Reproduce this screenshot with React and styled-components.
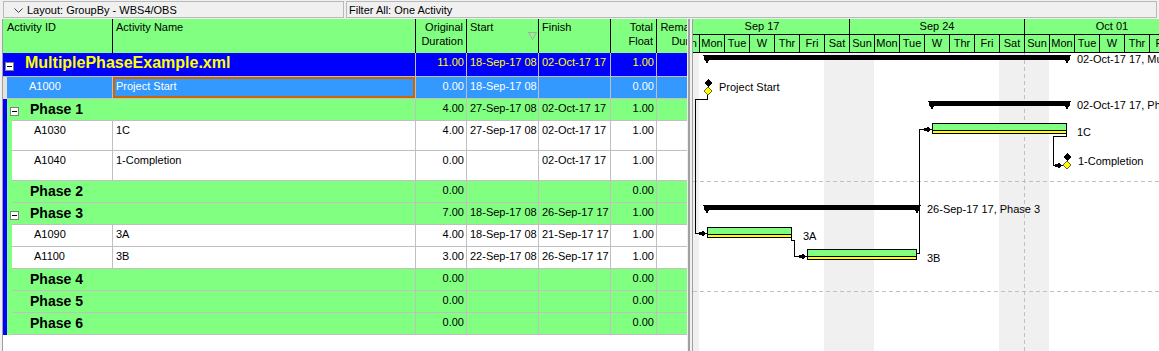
import React from 'react';
import styled, { createGlobalStyle } from 'styled-components';

const GREEN = '#80ff80';
const BLUE = '#0000ff';
const SELECT = '#3399ff';
const YELLOW = '#ffff00';
const GRID = '#c0c0c0';
const SHADE = '#f0f0f0';

// column widths of the activity table, the first one shrinks with the row's indent
const COLS = [110, 303, 51, 72, 72, 46, 60];
const cols = (indent = 0) =>
  COLS.map((w, i) => `${i === 0 ? w - indent : w}px`).join(' ');

// gantt scale: 25px a day, Sun 17-Sep starts 19px left of the visible area
const dayX = (d, h = 0) => Math.round(-19 + 25 * d + (25 * h) / 24);

const GlobalStyle = createGlobalStyle`
  html, body {
    margin: 0;
    padding: 0;
    background: #fff;
  }
  body {
    font-family: "Liberation Sans", Arial, sans-serif;
    font-size: 11px;
    color: #000;
  }
`;

const Page = styled.div`
  width: 1159px;
  height: 351px;
  overflow: hidden;
  display: flex;
  flex-direction: column;
  background: #fff;
`;

const TopBar = styled.div`
  flex: none;
  height: 19px;
  box-sizing: border-box;
  background: ${SHADE};
  display: flex;
  align-items: flex-start;
  gap: 2px;
  padding: 1px 0 0 3px;
`;

const BarBox = styled.div`
  flex: none;
  width: ${p => p.$w}px;
  height: 17px;
  box-sizing: border-box;
  border: 1px solid #b9b9b9;
  display: flex;
  align-items: center;
  gap: 4px;
  padding: 2px 0 0 ${p => p.$pl}px;
  line-height: 13px;
  white-space: nowrap;
`;

const Main = styled.div`
  flex: 1;
  display: flex;
  min-height: 0;
`;

const TablePane = styled.div`
  flex: none;
  width: 687px;
  box-sizing: border-box;
  border-left: 2px solid ${SHADE};
  padding-left: 1px;
  box-shadow: inset 1px 0 0 #a0a0a0;
  overflow: hidden;
`;

const Splitter = styled.div`
  flex: none;
  width: 5px;
  background: linear-gradient(
    to right,
    ${SHADE} 0 1px,
    #a0a0a0 1px 3px,
    ${SHADE} 3px 5px
  );
`;

const GanttPane = styled.div`
  flex: none;
  width: 467px;
  box-sizing: border-box;
  border-left: 1px solid #a0a0a0;
  overflow: hidden;
`;

const TableHeader = styled.div`
  display: grid;
  grid-template-columns: ${cols(0)};
  height: 34px;
  background: ${GREEN};
`;

const HeadCell = styled.div`
  border-right: 1px solid #000;
  padding: 1px 3px 0 ${p => p.$pl ?? 3}px;
  line-height: 14px;
  text-align: ${p => p.$align || 'left'};
  white-space: nowrap;
  overflow: hidden;
`;

const SortMark = styled.div`
  display: flex;
  justify-content: flex-end;
  margin: -2px -2px 0 0;
`;

const Row = styled.div`
  display: grid;
  grid-template-columns: ${p => cols(p.$indent)};
  height: ${p => p.$h}px;
  box-sizing: border-box;
  border-bottom: 1px solid ${GRID};
  background: ${p => p.$bg || 'transparent'};
  color: ${p => p.$fg || '#000'};
  box-shadow: ${p => (p.$band ? `-4px 0 0 #e2e2e2` : 'none')};
`;

const Cell = styled.div`
  border-right: 1px solid ${GRID};
  padding: 3px ${p => p.$pr ?? 3}px 0 ${p => p.$pl ?? 3}px;
  line-height: 13px;
  text-align: ${p => p.$align || 'left'};
  white-space: nowrap;
  overflow: hidden;
  box-shadow: ${p => (p.$selected ? 'inset 0 0 0 2px #cc6600' : 'none')};
`;

const TitleCell = styled.div`
  grid-column: span 2;
  border-right: 1px solid ${GRID};
  display: flex;
  align-items: flex-start;
  gap: 11px;
  padding-left: ${p => p.$pl}px;
  white-space: nowrap;
`;

const Toggle = styled.span`
  flex: none;
  width: 9px;
  height: 9px;
  box-sizing: border-box;
  margin: ${p => p.$mt}px 0 0 ${p => p.$ml || 0}px;
  border: 1px solid #808080;
  background: #fff;
  display: flex;
  align-items: center;
  justify-content: center;

  &::before {
    content: '';
    width: 5px;
    height: 1px;
    background: #000;
  }
`;

const ProjectTitle = styled.span`
  font-size: 16px;
  font-weight: bold;
  line-height: 20px;
  color: ${YELLOW};
`;

const PhaseTitle = styled.span`
  font-size: 14px;
  font-weight: bold;
  line-height: 20px;
`;

const ProjectBody = styled.div`
  border-left: 4px solid ${BLUE};
`;

const PhaseGroup = styled.div`
  background: ${GREEN};
  padding-left: 5px;
`;

const GanttHeader = styled.div`
  height: 34px;
  background: ${GREEN};
  overflow: hidden;
`;

const Timeline = styled.div`
  margin-left: -19px;
  width: 500px;
`;

const MonthRow = styled.div`
  display: flex;
  height: 16px;
  box-sizing: border-box;
  border-bottom: 1px solid #000;
`;

const MonthCell = styled.div`
  flex: none;
  width: 175px;
  box-sizing: border-box;
  border-left: 1px solid #000;
  text-align: center;
  line-height: 15px;
`;

const DayRow = styled.div`
  display: flex;
  height: 18px;
  box-sizing: border-box;
  border-bottom: 1px solid #000;
`;

const DayCell = styled.div`
  flex: none;
  width: 25px;
  box-sizing: border-box;
  border-left: 1px solid #000;
  text-align: center;
  line-height: 17px;
`;

const Chart = styled.svg`
  display: block;
`;

const BarLabel = styled.text`
  font-family: "Liberation Sans", Arial, sans-serif;
  font-size: 11px;
  fill: #000;
`;

const HEAD = [
  { lines: ['Activity ID'], pl: 4 },
  { lines: ['Activity Name'] },
  { lines: ['Original', 'Duration'], align: 'right' },
  { lines: ['Start'], sort: true },
  { lines: ['Finish'] },
  { lines: ['Total', 'Float'], align: 'right' },
  { lines: ['Remaining', 'Duration'], align: 'right' },
];

const project = {
  title: 'MultiplePhaseExample.xml',
  dur: '11.00', start: '18-Sep-17 08', finish: '02-Oct-17 17', tf: '1.00', rem: '11.00',
};

const projectStart = {
  id: 'A1000', name: 'Project Start',
  dur: '0.00', start: '18-Sep-17 08', finish: '', tf: '0.00', rem: '0.00',
};

const phases = [
  {
    name: 'Phase 1', dur: '4.00', start: '27-Sep-17 08', finish: '02-Oct-17 17', tf: '1.00', rem: '4.00',
    acts: [
      { id: 'A1030', name: '1C', dur: '4.00', start: '27-Sep-17 08', finish: '02-Oct-17 17', tf: '1.00', rem: '4.00', h: 30 },
      { id: 'A1040', name: '1-Completion', dur: '0.00', start: '', finish: '02-Oct-17 17', tf: '1.00', rem: '0.00', h: 30 },
    ],
  },
  { name: 'Phase 2', dur: '0.00', tf: '0.00', rem: '0.00', acts: [] },
  {
    name: 'Phase 3', dur: '7.00', start: '18-Sep-17 08', finish: '26-Sep-17 17', tf: '1.00', rem: '7.00',
    acts: [
      { id: 'A1090', name: '3A', dur: '4.00', start: '18-Sep-17 08', finish: '21-Sep-17 17', tf: '1.00', rem: '4.00', h: 22 },
      { id: 'A1100', name: '3B', dur: '3.00', start: '22-Sep-17 08', finish: '26-Sep-17 17', tf: '1.00', rem: '3.00', h: 22 },
    ],
  },
  { name: 'Phase 4', dur: '0.00', tf: '0.00', rem: '0.00', acts: [] },
  { name: 'Phase 5', dur: '0.00', tf: '0.00', rem: '0.00', acts: [] },
  { name: 'Phase 6', dur: '0.00', tf: '0.00', rem: '0.00', acts: [] },
];

const MONTHS = ['Sep 17', 'Sep 24', 'Oct 01'];
const DAYS = ['Sun', 'Mon', 'Tue', 'W', 'Thr', 'Fri', 'Sat'];

function DataCells({ r }) {
  return (
    <>
      <Cell $align="right" $pr={2}>{r.dur}</Cell>
      <Cell>{r.start}</Cell>
      <Cell>{r.finish}</Cell>
      <Cell $align="right" $pr={2}>{r.tf}</Cell>
      <Cell $align="right" $pr={3}>{r.rem}</Cell>
    </>
  );
}

function ChevronIcon() {
  return (
    <svg width="9" height="6" viewBox="0 0 9 6">
      <polyline points="0.5,0.5 4.5,4.5 8.5,0.5" fill="none" stroke="#404040" strokeWidth="1" />
    </svg>
  );
}

function SortIcon() {
  return (
    <svg width="9" height="8" viewBox="0 0 9 8">
      <polygon points="0.5,0.5 8.5,0.5 4.5,7.5" fill="none" stroke="#a8a8a8" strokeWidth="1" />
    </svg>
  );
}

function ActivityTable() {
  return (
    <TablePane>
      <TableHeader>
        {HEAD.map((h, i) => (
          <HeadCell key={i} $align={h.align} $pl={h.pl}>
            {h.lines.map(l => <div key={l}>{l}</div>)}
            {h.sort && <SortMark><SortIcon /></SortMark>}
          </HeadCell>
        ))}
      </TableHeader>

      <Row $indent={0} $h={24} $bg={BLUE} $fg={YELLOW}>
        <TitleCell $pl={2}>
          <Toggle $mt={9} />
          <ProjectTitle>{project.title}</ProjectTitle>
        </TitleCell>
        <DataCells r={project} />
      </Row>

      <ProjectBody>
        <Row $indent={4} $h={22} $bg={SELECT} $fg="#fff" $band>
          <Cell $pl={22}>{projectStart.id}</Cell>
          <Cell $selected>{projectStart.name}</Cell>
          <DataCells r={projectStart} />
        </Row>

        <PhaseGroup>
          {phases.map(ph => (
            <React.Fragment key={ph.name}>
              <Row $indent={9} $h={22}>
                <TitleCell $pl={ph.acts.length ? 0 : 18}>
                  {ph.acts.length > 0 && <Toggle $mt={8} $ml={-2} />}
                  <PhaseTitle>{ph.name}</PhaseTitle>
                </TitleCell>
                <DataCells r={ph} />
              </Row>
              {ph.acts.map(a => (
                <Row key={a.id} $indent={9} $h={a.h} $bg="#fff">
                  <Cell $pl={22}>{a.id}</Cell>
                  <Cell>{a.name}</Cell>
                  <DataCells r={a} />
                </Row>
              ))}
            </React.Fragment>
          ))}
        </PhaseGroup>
      </ProjectBody>
    </TablePane>
  );
}

const diamond = (x, y, r) => `${x},${y - r} ${x + r},${y} ${x},${y + r} ${x - r},${y}`;

function SummaryBar({ x1, x2, top, label }) {
  return (
    <g>
      <rect x={x1 - 3} y={top + 2} width={x2 - x1 + 6} height={5} fill="#000" />
      <polygon points={`${x1 - 4},${top + 2} ${x1 + 4},${top + 2} ${x1},${top + 11}`} fill="#000" />
      <polygon points={`${x2 - 4},${top + 2} ${x2 + 4},${top + 2} ${x2},${top + 11}`} fill="#000" />
      <BarLabel x={x2 + 10} y={top + 10}>{label}</BarLabel>
    </g>
  );
}

function TaskBar({ x1, x2, top, label, gap = 10 }) {
  const y = top + 2;
  const w = x2 - x1;
  return (
    <g>
      <rect x={x1} y={y} width={w} height={11} fill="#000" />
      <rect x={x1 + 1} y={y + 1} width={w - 2} height={6} fill={GREEN} />
      <rect x={x1 + 1} y={y + 8} width={w - 2} height={2} fill={YELLOW} />
      <BarLabel x={x2 + gap} y={top + 14.5}>{label}</BarLabel>
    </g>
  );
}

function Milestone({ x, top, label }) {
  return (
    <g>
      <polygon points={diamond(x, top + 6, 4)} fill="#000" />
      <polygon points={diamond(x, top + 14, 4)} fill={YELLOW} stroke="#000" strokeWidth="0.6" />
      <BarLabel x={x + 11} y={top + 14}>{label}</BarLabel>
    </g>
  );
}

function Arrow({ x, y }) {
  return (
    <g fill="#000">
      <rect x={x - 8} y={y - 1.5} width={4} height={3} />
      <polygon points={`${x},${y} ${x - 5},${y - 3} ${x - 5},${y + 3}`} />
    </g>
  );
}

function GanttChart() {
  const start = dayX(1, 8);
  const finish = dayX(15, 17);
  const p1s = dayX(10, 8);
  const a3s = dayX(1, 8);
  const a3e = dayX(4, 17);
  const b3s = dayX(5, 8);
  const b3e = dayX(9, 17);

  return (
    <GanttPane>
      <GanttHeader>
        <Timeline>
          <MonthRow>
            {MONTHS.map(m => <MonthCell key={m}>{m}</MonthCell>)}
          </MonthRow>
          <DayRow>
            {Array.from({ length: 20 }, (_, i) => (
              <DayCell key={i}>{DAYS[i % 7]}</DayCell>
            ))}
          </DayRow>
        </Timeline>
      </GanttHeader>

      <Chart width="466" height="298" viewBox="0 0 466 298" shapeRendering="crispEdges">
        {/* weekend shading */}
        <rect x={0} y={0} width={dayX(1)} height={298} fill={SHADE} />
        <rect x={dayX(6)} y={0} width={50} height={298} fill={SHADE} />
        <rect x={dayX(13)} y={0} width={50} height={298} fill={SHADE} />

        <g stroke={GRID} strokeDasharray="4 3">
          <line x1={0} x2={466} y1={128.5} y2={128.5} />
          <line x1={0} x2={466} y1={238.5} y2={238.5} />
          <line x1={dayX(14) + 0.5} x2={dayX(14) + 0.5} y1={0} y2={298} />
        </g>

        {/* relationship lines */}
        <g fill="none" stroke="#000" strokeWidth="1">
          <path d={`M${start + 0.5} 42 V46.5 H2.5 V180.5 H${a3s - 6}`} />
          <path d={`M${a3e - 0.5} 185 V187.5 H101.5 V203.5 H${b3s - 6}`} />
          <path d={`M${b3e} 200.5 H226.5 V76.5 H${p1s - 6}`} />
          <path d={`M${finish - 0.5} 81 V83.5 H360.5 V112.5 H${finish - 10}`} />
        </g>
        <Arrow x={a3s} y={180.5} />
        <Arrow x={b3s} y={203.5} />
        <Arrow x={p1s} y={76.5} />
        <Arrow x={finish - 4} y={112.5} />

        <SummaryBar x1={start} x2={finish} top={0} label="02-Oct-17 17, MultiplePhaseExample.xml" />
        <Milestone x={start + 1} top={24} label="Project Start" />
        <SummaryBar x1={p1s} x2={finish} top={46} label="02-Oct-17 17, Phase 1" />
        <TaskBar x1={p1s} x2={finish} top={68} label="1C" />
        <Milestone x={finish} top={98} label="1-Completion" />
        <SummaryBar x1={a3s} x2={b3e} top={150} label="26-Sep-17 17, Phase 3" />
        <TaskBar x1={a3s} x2={a3e} top={172} label="3A" gap={11} />
        <TaskBar x1={b3s} x2={b3e} top={194} label="3B" />
      </Chart>
    </GanttPane>
  );
}

export default function App() {
  return (
    <>
      <GlobalStyle />
      <Page>
        <TopBar>
          <BarBox $w={341} $pl={10}>
            <ChevronIcon />
            <span>Layout: GroupBy - WBS4/OBS</span>
          </BarBox>
          <BarBox $w={811} $pl={2}>
            <span>Filter All: One Activity</span>
          </BarBox>
        </TopBar>
        <Main>
          <ActivityTable />
          <Splitter />
          <GanttChart />
        </Main>
      </Page>
    </>
  );
}
